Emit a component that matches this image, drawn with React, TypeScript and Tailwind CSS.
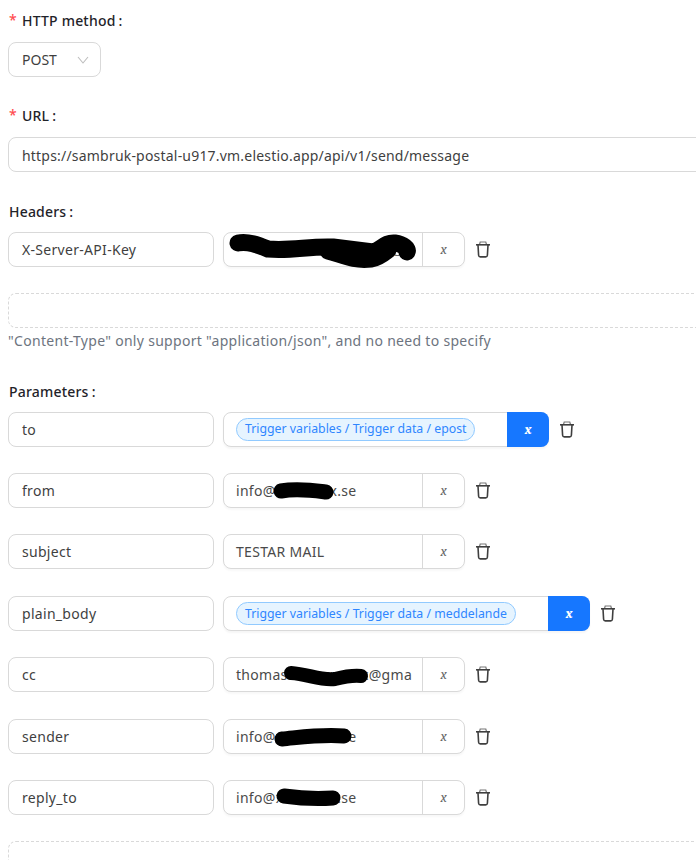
import type { ReactNode } from "react"

const font = { fontFamily: '"Noto Sans", "Open Sans", sans-serif' }

function TrashIcon() {
  return (
    <svg width="16" height="17" viewBox="0 0 16 17" fill="none" stroke="#3f3f3f" className="shrink-0">
      <path d="M4.5 3.5 L5.2 1 H10.8 L11.5 3.5" strokeWidth="1.2" stroke="#777" />
      <path d="M1 3.8 H15" strokeWidth="1.6" />
      <path d="M3 4 L3.6 14.2 C3.7 15.3 4.3 15.9 5.3 15.9 H10.7 C11.7 15.9 12.3 15.3 12.4 14.2 L13 4" strokeWidth="1.6" />
    </svg>
  )
}

function Scribble({ d, width, className }: { d: string; width: number; className: string }) {
  return (
    <svg className={`pointer-events-none absolute ${className}`} width="200" height="40" viewBox="0 0 200 40" fill="none">
      <path d={d} stroke="#000" strokeWidth={width} strokeLinecap="round" strokeLinejoin="round" />
    </svg>
  )
}

function Label({ children, required }: { children: string; required?: boolean }) {
  return (
    <div className="flex h-[20px] items-center pl-[9px] text-[14px] font-medium tracking-[0.2px] text-[#1f2329]">
      {required && <span className="mr-[6px] w-[7px] text-[14px] leading-none text-[#ff4d4f]">*</span>}
      <span>{children}</span>
      <span className="ml-[3px]">:</span>
    </div>
  )
}

function KeyBox({ value }: { value: string }) {
  return (
    <div className="flex h-[35px] w-[206px] shrink-0 items-center rounded-[8px] border border-[#d9d9d9] bg-white pl-[13px] text-[14px] tracking-[0.3px] text-[#3f3f3f]">
      {value}
    </div>
  )
}

function Row({ name, value, scribble }: { name: string; value: string; scribble?: ReactNode }) {
  return (
    <div className="flex items-center pl-[8px]">
      <KeyBox value={name} />
      <div className="relative ml-[9px] flex h-[35px] w-[242px] shrink-0 rounded-[8px] border border-[#d9d9d9] bg-white shadow-[0_2px_2px_rgba(0,0,0,0.03)]">
        <div className="flex min-w-0 flex-1 items-center px-[12px] text-[14px] tracking-[0.3px] whitespace-nowrap text-[#4a4a4a]">
          {value}
        </div>
        <div className="flex w-[42px] shrink-0 items-center justify-center border-l border-[#d9d9d9] font-serif text-[14px] text-[#666] italic">
          x
        </div>
        {scribble}
      </div>
      <div className="ml-[10px]">
        <TrashIcon />
      </div>
    </div>
  )
}

function VarRow({ name, value, width }: { name: string; value: string; width: string }) {
  return (
    <div className="flex items-center pl-[8px]">
      <KeyBox value={name} />
      <div className={`ml-[9px] flex h-[35px] shrink-0 rounded-[8px] border border-[#d9d9d9] bg-white shadow-[0_2px_2px_rgba(0,0,0,0.04)] ${width}`}>
        <div className="flex min-w-0 flex-1 items-center pl-[12px]">
          <span className="flex h-[23px] items-center rounded-full border border-[#91caff] bg-[#e6f4ff] px-[8px] pt-px text-[12.3px] whitespace-nowrap text-[#2f86ff]">
            {value}
          </span>
        </div>
        <div className="-my-px -mr-px flex w-[42px] shrink-0 items-center justify-center rounded-r-[8px] bg-[#1677ff] font-serif text-[14px] font-bold text-white italic">
          x
        </div>
      </div>
      <div className="ml-[10px]">
        <TrashIcon />
      </div>
    </div>
  )
}

function DashedBox({ className }: { className: string }) {
  return <div className={`ml-[8px] w-[720px] rounded-[8px] border border-dashed border-[#d9d9d9] ${className}`} />
}

export default function App() {
  return (
    <div className="h-[860px] w-[696px] overflow-hidden bg-white pt-[10px]" style={font}>
      <Label required>HTTP method</Label>
      <div className="mt-[12px] ml-[8px] flex h-[35px] w-[93px] items-center justify-between rounded-[8px] border border-[#d9d9d9] pr-[11px] pl-[13px] text-[14px] text-[#3f3f3f]">
        <span>POST</span>
        <svg width="12" height="8" viewBox="0 0 12 8" fill="none" stroke="#bdbdbd" strokeWidth="1.1">
          <path d="M1 1 L6 7 L11 1" />
        </svg>
      </div>

      <div className="mt-[28px]">
        <Label required>URL</Label>
      </div>
      <div className="mt-[12px] ml-[8px] flex h-[35px] w-[720px] items-center rounded-[8px] border border-[#d9d9d9] pt-px pl-[13px] text-[14px] tracking-[0.2px] text-[#3f3f3f]">
        https://sambruk-postal-u917.vm.elestio.app/api/v1/send/message
      </div>

      <div className="mt-[29px]">
        <Label>Headers</Label>
      </div>
      <div className="mt-[11px]">
        <Row
          name="X-Server-API-Key"
          value=""
          scribble={
            <>
              <span className="absolute top-[7px] left-[170px] text-[14px] text-[#666]">3H</span>
              <Scribble
                className="-top-[3px] -left-[1px]"
                width={17}
                d="M15 13 C25 11 35 15 45 19 C70 21 85 16 110 17 C125 19 135 20 150 22 C158 20 162 12 172 13 C180 14 186 19 184 22"
              />
              <Scribble className="-top-[3px] -left-[1px]" width={17} d="M105 21 C120 25 130 31 148 29 C155 28 160 24 165 20" />
            </>
          }
        />
      </div>

      <DashedBox className="mt-[26px] h-[35px]" />
      <div className="mt-[2px] ml-[8px] text-[14px] tracking-[0.3px] text-[#6d7480]">
        "Content-Type" only support "application/json", and no need to specify
      </div>

      <div className="mt-[30px]">
        <Label>Parameters</Label>
      </div>
      <div className="mt-[10.6px] flex flex-col gap-[26.4px]">
        <VarRow name="to" value="Trigger variables / Trigger data / epost" width="w-[326px]" />
        <Row
          name="from"
          value="info@xxxxxxxx.se"
          scribble={<Scribble className="top-0 -left-[1px]" width={15} d="M58 17 C75 14 95 17 103 18" />}
        />
        <Row name="subject" value="TESTAR MAIL" />
        <VarRow name="plain_body" value="Trigger variables / Trigger data / meddelande" width="w-[367px]" />
        <Row
          name="cc"
          value="thomas.xxxxxxxxxx@gma"
          scribble={<Scribble className="top-0 -left-[1px]" width={14} d="M68 15 C85 16 98 23 112 21 C120 19 128 17 138 18" />}
        />
        <Row
          name="sender"
          value="info@xxxxxxxx.se"
          scribble={<Scribble className="top-0 -left-[1px]" width={15} d="M59 19 C80 17 100 14 121 16" />}
        />
        <Row
          name="reply_to"
          value="info@xxxxxxxx.se"
          scribble={<Scribble className="top-0 -left-[1px]" width={15} d="M61 15 C75 17 95 18 110 17" />}
        />
      </div>

      <DashedBox className="mt-[26.4px] h-[35px]" />
    </div>
  )
}
